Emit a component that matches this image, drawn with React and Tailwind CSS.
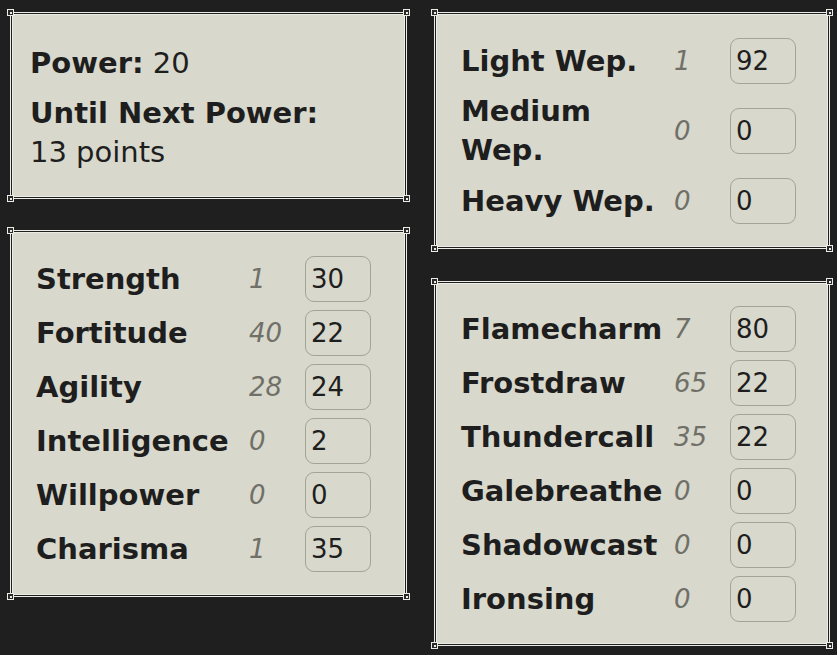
import React from "react";

const Corner = ({ pos }) => (
  <div className={`absolute ${pos} w-[7px] h-[7px] border border-[#ecece6] bg-[#2a2a2a] flex items-center justify-center`}>
    <div className="w-[2px] h-[2px] bg-[#ecece6]" />
  </div>
);

const Panel = ({ className = "", children }) => (
  <div className={`relative border-[3px] border-double border-[#ecece6] bg-[#d8d8cc] bg-clip-padding text-[#1e1e1e] ${className}`}>
    <Corner pos="-top-[6px] -left-[6px]" />
    <Corner pos="-top-[6px] -right-[6px]" />
    <Corner pos="-bottom-[6px] -left-[6px]" />
    <Corner pos="-bottom-[6px] -right-[6px]" />
    {children}
  </div>
);

const Row = ({ label, num, val }) => (
  <>
    <div className="font-bold text-[29px] leading-[39px] pr-[4px]">{label}</div>
    <div className="italic text-[26px] leading-[39px] text-[#707068]">{num}</div>
    <div className="h-[46px] w-[66px] rounded-[9px] border border-[#a3a396] flex items-center pl-[5px] text-[26px]">{val}</div>
  </>
);

const Grid = ({ rows }) => (
  <div className="grid grid-cols-[213px_56px_66px] gap-y-[8px] items-center">
    {rows.map((r) => (
      <Row key={r[0]} label={r[0]} num={r[1]} val={r[2]} />
    ))}
  </div>
);

export default function App() {
  return (
    <div className="min-h-[655px] bg-[#1f1f1f] font-['DejaVu_Sans',sans-serif] pl-[10px] pt-[12px]">
      <div className="flex gap-[27px] items-start">
        <div className="flex flex-col gap-[31px] w-[397px]">
          <Panel className="pl-[17px] pt-[29px] pb-[24px]">
            <p className="text-[29px] leading-[39px]"><span className="font-bold">Power:</span> 20</p>
            <p className="text-[29px] leading-[39px] mt-[11px]">
              <span className="font-bold">Until Next Power:</span>
              <br />13 points
            </p>
          </Panel>
          <Panel className="pl-[23px] pt-[23px] pb-[22px]">
            <Grid
              rows={[
                ["Strength", "1", "30"],
                ["Fortitude", "40", "22"],
                ["Agility", "28", "24"],
                ["Intelligence", "0", "2"],
                ["Willpower", "0", "0"],
                ["Charisma", "1", "35"],
              ]}
            />
          </Panel>
        </div>
        <div className="flex flex-col gap-[32px] w-[396px]">
          <Panel className="pl-[24px] pt-[23px] pb-[22px]">
            <Grid
              rows={[
                ["Light Wep.", "1", "92"],
                ["Medium Wep.", "0", "0"],
                ["Heavy Wep.", "0", "0"],
              ]}
            />
          </Panel>
          <Panel className="pl-[24px] pt-[22px] pb-[21px]">
            <Grid
              rows={[
                ["Flamecharm", "7", "80"],
                ["Frostdraw", "65", "22"],
                ["Thundercall", "35", "22"],
                ["Galebreathe", "0", "0"],
                ["Shadowcast", "0", "0"],
                ["Ironsing", "0", "0"],
              ]}
            />
          </Panel>
        </div>
      </div>
    </div>
  );
}
